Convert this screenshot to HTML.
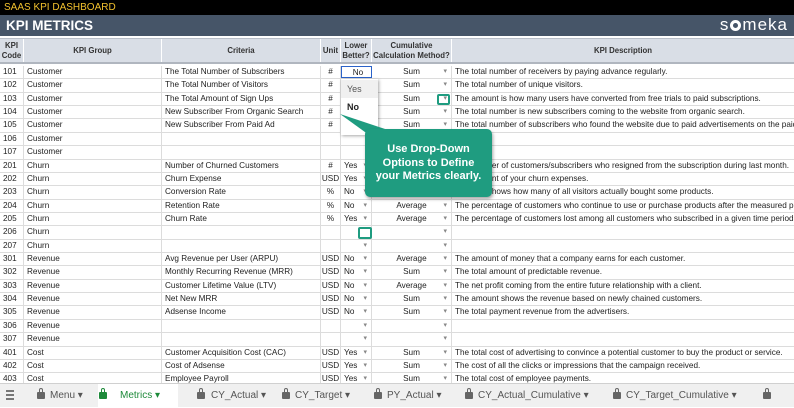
<!DOCTYPE html>
<html><head><meta charset="utf-8">
<style>
*{margin:0;padding:0;box-sizing:border-box}
body{width:794px;height:407px;overflow:hidden;background:#fff;font-family:"Liberation Sans",sans-serif;position:relative;font-size:8.2px;color:#222}
.top{position:absolute;left:0;top:0;width:794px;height:15px;background:#000;color:#f2c12e;font-size:10px;padding-left:4px;line-height:15px}
.bar{position:absolute;left:0;top:15px;width:794px;height:21px;background:#465568;color:#fff;font-weight:bold;font-size:13.5px;line-height:21px;padding-left:6px}
.logo{position:absolute;right:6px;top:15px;color:#fff;font-size:17px;line-height:20px;letter-spacing:1px}
.hdr{position:absolute;left:0;top:38px;height:26px;width:794px;background:#d9dee6;border-top:1px solid #b8bec8;border-bottom:2px solid #b0b6bf;display:flex;font-weight:bold;font-size:7.8px;color:#333}
.hdr div{border-right:1px solid #fff;display:flex;align-items:center;justify-content:center;text-align:center;line-height:9.5px}
.rows{position:absolute;left:0;top:66px;width:794px}
.r{display:flex;height:13.36px;border-bottom:1px solid #dcdcdc;line-height:12.3px;white-space:nowrap}
.r span{border-right:1px solid #dcdcdc;overflow:hidden;padding-left:3px;position:relative}
.c0{width:24px}.c1{width:138px}.c2{width:159px}.c3{width:20px;text-align:center;padding:0!important}.c4{width:31px}.c5{width:80px;text-align:center}.c6{width:342px;border:0!important}
.d:after{content:"▾";position:absolute;right:4px;top:0;font-size:7px;color:#888}
.c5.d{padding-left:0}
.tabs{position:absolute;left:0;top:383px;width:794px;height:24px;background:#f0f0f0;border-top:1px solid #d0d0d0;font-size:10px;color:#555}
.tab{position:absolute;top:0;height:24px;line-height:24px;padding-left:14px}
.tab:before{content:"";position:absolute;left:1px;top:8px;width:8px;height:7px;background:#666;border-radius:1px}
.tab:after{content:"";position:absolute;left:2.5px;top:4px;width:5px;height:5px;border:1.5px solid #666;border-bottom:0;border-radius:3px 3px 0 0;box-sizing:content-box;width:2px}
.act{background:#fff;color:#1e8a3a}
.act:before{background:#1e8a3a}.act:after{border-color:#1e8a3a}
.call{position:absolute;left:365px;top:129px;width:127px;height:68px;background:#1f9c80;border-radius:5px;color:#fff;font-weight:bold;font-size:11px;text-align:center;line-height:13.5px;padding-top:14px;box-shadow:1px 2px 3px rgba(0,0,0,.35)}
</style></head><body>
<div class="top">SAAS KPI DASHBOARD</div>
<div class="bar">KPI METRICS</div>
<div class="logo">s<span style="display:inline-block;width:11px;height:11px;border:3px solid #fff;border-radius:50%;vertical-align:-1px;margin:0 1px"></span>meka</div>
<div class="hdr"><div style="width:24px">KPI<br>Code</div><div style="width:138px">KPI Group</div><div style="width:159px">Criteria</div><div style="width:20px">Unit</div><div style="width:31px">Lower<br>Better?</div><div style="width:80px">Cumulative<br>Calculation Method?</div><div style="width:342px;border:0">KPI Description</div></div>
<div class="rows">
<div class="r"><span class="c0">101</span><span class="c1">Customer</span><span class="c2">The Total Number of Subscribers</span><span class="c3">#</span><span class="c4" style="border:1.5px solid #2a62c9;text-align:center">No</span><span class="c5 d">Sum</span><span class="c6">The total number of receivers by paying advance regularly.</span></div>
<div class="r"><span class="c0">102</span><span class="c1">Customer</span><span class="c2">The Total Number of Visitors</span><span class="c3">#</span><span class="c4"></span><span class="c5 d">Sum</span><span class="c6">The total number of unique visitors.</span></div>
<div class="r"><span class="c0">103</span><span class="c1">Customer</span><span class="c2">The Total Amount of Sign Ups</span><span class="c3">#</span><span class="c4"></span><span class="c5 d">Sum</span><span class="c6">The amount is how many users have converted from free trials to paid subscriptions.</span></div>
<div class="r"><span class="c0">104</span><span class="c1">Customer</span><span class="c2">New Subscriber From Organic Search</span><span class="c3">#</span><span class="c4"></span><span class="c5 d">Sum</span><span class="c6">The total number is new subscribers coming to the website from organic search.</span></div>
<div class="r"><span class="c0">105</span><span class="c1">Customer</span><span class="c2">New Subscriber From Paid Ad</span><span class="c3">#</span><span class="c4"></span><span class="c5 d">Sum</span><span class="c6">The total number of subscribers who found the website due to paid advertisements on the paid</span></div>
<div class="r"><span class="c0">106</span><span class="c1">Customer</span><span class="c2"></span><span class="c3"></span><span class="c4"></span><span class="c5"></span><span class="c6"></span></div>
<div class="r"><span class="c0">107</span><span class="c1">Customer</span><span class="c2"></span><span class="c3"></span><span class="c4"></span><span class="c5"></span><span class="c6"></span></div>
<div class="r"><span class="c0">201</span><span class="c1">Churn</span><span class="c2">Number of Churned Customers</span><span class="c3">#</span><span class="c4 d">Yes</span><span class="c5"></span><span class="c6">The number of customers/subscribers who resigned from the subscription during last month.</span></div>
<div class="r"><span class="c0">202</span><span class="c1">Churn</span><span class="c2">Churn Expense</span><span class="c3">USD</span><span class="c4 d">Yes</span><span class="c5"></span><span class="c6">The amount of your churn expenses.</span></div>
<div class="r"><span class="c0">203</span><span class="c1">Churn</span><span class="c2">Conversion Rate</span><span class="c3">%</span><span class="c4 d">No</span><span class="c5"></span><span class="c6">The rate shows how many of all visitors actually bought some products.</span></div>
<div class="r"><span class="c0">204</span><span class="c1">Churn</span><span class="c2">Retention Rate</span><span class="c3">%</span><span class="c4 d">No</span><span class="c5 d">Average</span><span class="c6">The percentage of customers who continue to use or purchase products after the measured period.</span></div>
<div class="r"><span class="c0">205</span><span class="c1">Churn</span><span class="c2">Churn Rate</span><span class="c3">%</span><span class="c4 d">Yes</span><span class="c5 d">Average</span><span class="c6">The percentage of customers lost among all customers who subscribed in a given time period.</span></div>
<div class="r"><span class="c0">206</span><span class="c1">Churn</span><span class="c2"></span><span class="c3"></span><span class="c4"></span><span class="c5 d"></span><span class="c6"></span></div>
<div class="r"><span class="c0">207</span><span class="c1">Churn</span><span class="c2"></span><span class="c3"></span><span class="c4 d"></span><span class="c5 d"></span><span class="c6"></span></div>
<div class="r"><span class="c0">301</span><span class="c1">Revenue</span><span class="c2">Avg Revenue per User (ARPU)</span><span class="c3">USD</span><span class="c4 d">No</span><span class="c5 d">Average</span><span class="c6">The amount of money that a company earns for each customer.</span></div>
<div class="r"><span class="c0">302</span><span class="c1">Revenue</span><span class="c2">Monthly Recurring Revenue (MRR)</span><span class="c3">USD</span><span class="c4 d">No</span><span class="c5 d">Sum</span><span class="c6">The total amount of predictable revenue.</span></div>
<div class="r"><span class="c0">303</span><span class="c1">Revenue</span><span class="c2">Customer Lifetime Value (LTV)</span><span class="c3">USD</span><span class="c4 d">No</span><span class="c5 d">Average</span><span class="c6">The net profit coming from the entire future relationship with a client.</span></div>
<div class="r"><span class="c0">304</span><span class="c1">Revenue</span><span class="c2">Net New MRR</span><span class="c3">USD</span><span class="c4 d">No</span><span class="c5 d">Sum</span><span class="c6">The amount shows the revenue based on newly chained customers.</span></div>
<div class="r"><span class="c0">305</span><span class="c1">Revenue</span><span class="c2">Adsense Income</span><span class="c3">USD</span><span class="c4 d">No</span><span class="c5 d">Sum</span><span class="c6">The total payment revenue from the advertisers.</span></div>
<div class="r"><span class="c0">306</span><span class="c1">Revenue</span><span class="c2"></span><span class="c3"></span><span class="c4 d"></span><span class="c5 d"></span><span class="c6"></span></div>
<div class="r"><span class="c0">307</span><span class="c1">Revenue</span><span class="c2"></span><span class="c3"></span><span class="c4 d"></span><span class="c5 d"></span><span class="c6"></span></div>
<div class="r"><span class="c0">401</span><span class="c1">Cost</span><span class="c2">Customer Acquisition Cost (CAC)</span><span class="c3">USD</span><span class="c4 d">Yes</span><span class="c5 d">Sum</span><span class="c6">The total cost of advertising to convince a potential customer to buy the product or service.</span></div>
<div class="r"><span class="c0">402</span><span class="c1">Cost</span><span class="c2">Cost of Adsense</span><span class="c3">USD</span><span class="c4 d">Yes</span><span class="c5 d">Sum</span><span class="c6">The cost of all the clicks or impressions that the campaign received.</span></div>
<div class="r"><span class="c0">403</span><span class="c1">Cost</span><span class="c2">Employee Payroll</span><span class="c3">USD</span><span class="c4 d">Yes</span><span class="c5 d">Sum</span><span class="c6">The total cost of employee payments.</span></div>
</div>
<div style="position:absolute;left:341px;top:79px;width:37px;height:56px;background:#fff;box-shadow:1px 1px 3px rgba(0,0,0,.35);font-size:9px">
<div style="height:18px;background:#f0f0f0;margin-top:1px;line-height:18px;padding-left:6px;color:#555">Yes</div>
<div style="line-height:18px;padding-left:6px;font-weight:bold;color:#222">No</div>
</div>
<div style="position:absolute;left:437px;top:94px;width:13px;height:11px;border:2px solid #1f9c80;border-radius:2px"></div>
<div style="position:absolute;left:358px;top:227px;width:14px;height:12px;border:2px solid #1f9c80;border-radius:2px"></div>
<svg style="position:absolute;left:338px;top:110px" width="60" height="40"><polygon points="2,4 50,20 38,30" fill="#1f9c80"/></svg>
<div class="call">Use Drop-Down<br>Options to Define<br>your Metrics clearly.</div>
<div class="tabs">
<div style="position:absolute;left:6px;top:6px;width:8px;height:10px;border-top:2px solid #777;border-bottom:2px solid #777"><div style="margin-top:2px;border-top:2px solid #777"></div></div>
<div class="tab" style="left:36px">Menu ▾</div>
<div class="tab act" style="left:98px;width:80px;padding-left:22px">Metrics ▾</div>
<div class="tab" style="left:196px;padding-left:0"><span style="padding-left:15px">CY_Actual ▾</span></div>
<div class="tab" style="left:281px">CY_Target ▾</div>
<div class="tab" style="left:373px">PY_Actual ▾</div>
<div class="tab" style="left:464px">CY_Actual_Cumulative ▾</div>
<div class="tab" style="left:612px">CY_Target_Cumulative ▾</div>
<div class="tab" style="left:762px"></div>
</div>
</body></html>
